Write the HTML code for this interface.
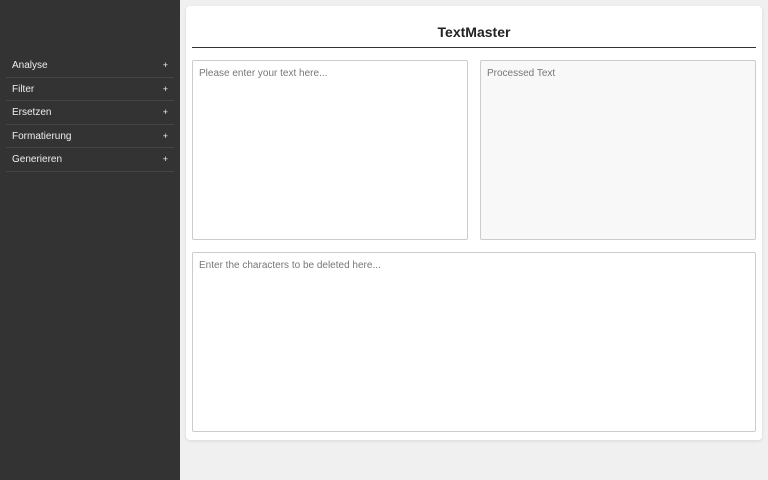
<!DOCTYPE html>
<html><head><meta charset="utf-8"><style>
*{box-sizing:border-box;margin:0;padding:0}
body{width:768px;height:480px;background:#f0f0f0;font-family:"Liberation Sans",sans-serif;position:relative;overflow:hidden}
#sb{position:absolute;left:0;top:0;width:180px;height:480px;background:#333}
.it{position:absolute;left:6px;width:168px;height:23.5px;border-bottom:1px solid #444;color:#eee;font-size:10px}
.it span{position:absolute;left:6px;top:6px}
.it b{position:absolute;right:6px;top:6px;font-weight:normal;font-size:9px}
#card{position:absolute;left:186px;top:6px;width:576px;height:434px;background:#fff;border-radius:4px;box-shadow:0 1px 3px rgba(0,0,0,.1)}
h1{position:absolute;left:0;width:576px;top:18px;text-align:center;font-size:14px;color:#222}
#line{position:absolute;left:6px;top:41px;width:564px;height:1px;background:#333}
.ta{position:absolute;border:1px solid #ccc;border-radius:2px;font-size:10px;color:#777;padding:7px 6px}
</style></head><body>
<div id="sb">
<div class="it" style="top:54px"><span>Analyse</span><b>+</b></div>
<div class="it" style="top:77.5px"><span>Filter</span><b>+</b></div>
<div class="it" style="top:101px"><span>Ersetzen</span><b>+</b></div>
<div class="it" style="top:124.5px"><span>Formatierung</span><b>+</b></div>
<div class="it" style="top:148px"><span>Generieren</span><b>+</b></div>
</div>
<div id="card">
<h1>TextMaster</h1><div id="line"></div>
<div class="ta" style="left:6px;top:54px;width:276px;height:180px">Please enter your text here...</div>
<div class="ta" style="left:294px;top:54px;width:276px;height:180px;background:#f8f8f8">Processed Text</div>
<div class="ta" style="left:6px;top:246px;width:564px;height:180px">Enter the characters to be deleted here...</div>
</div>
</body></html>
